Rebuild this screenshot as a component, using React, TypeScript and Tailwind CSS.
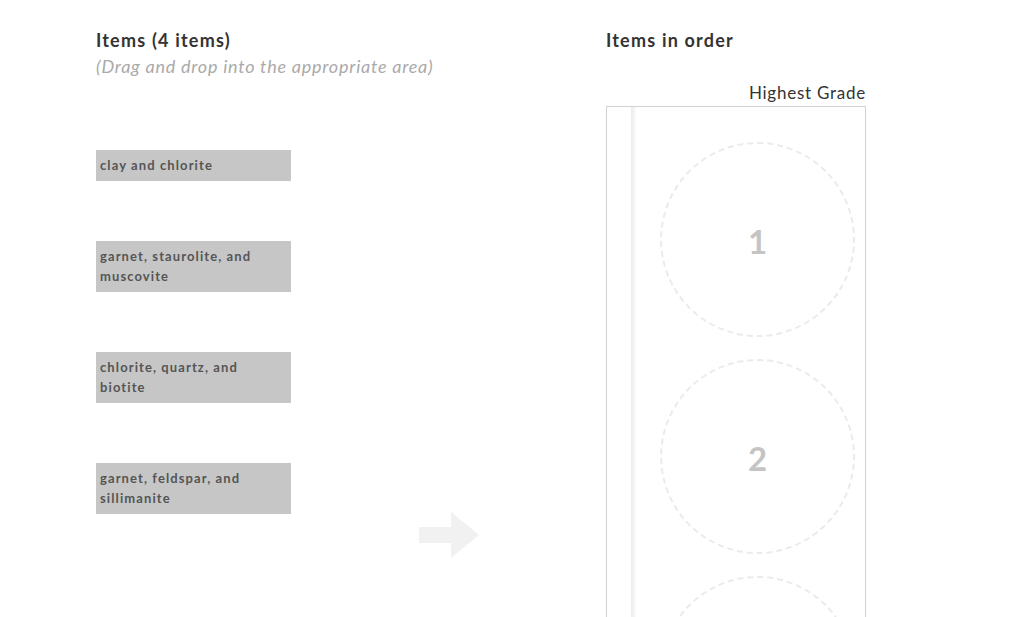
const items = [
  'clay and chlorite',
  'garnet, staurolite, and muscovite',
  'chlorite, quartz, and biotite',
  'garnet, feldspar, and sillimanite',
];

const slots = [1, 2, 3];

function Arrow() {
  return (
    <svg width="60" height="46" viewBox="0 0 60 46" className="block">
      <path d="M0 15 H32 V0 L60 23 L32 46 V31 H0 Z" fill="#f1f1f1" />
    </svg>
  );
}

export default function App() {
  return (
    <div
      className="h-[617px] w-[1024px] overflow-hidden bg-white text-[#333]"
      style={{ fontFamily: 'Lato, "Open Sans", sans-serif' }}
    >
      <div className="flex pl-[96px] pt-[29px]">
        {/* Left: draggable items */}
        <div className="w-[510px] flex-shrink-0">
          <h2 className="text-[18px] font-bold leading-[22px] tracking-[1.2px]">Items (4 items)</h2>
          <p className="text-[18px] italic leading-[30px] text-[#aaa] tracking-[0.75px]">
            (Drag and drop into the appropriate area)
          </p>

          <div className="mt-[69px] flex flex-col gap-[60px]">
            {items.map((item) => (
              <div
                key={item}
                className="w-[195px] bg-[#c6c6c6] py-[5px] pl-[4px] pr-[12px] text-[13px] font-bold leading-[20.5px] tracking-[1.1px] text-[#555]"
              >
                {item}
              </div>
            ))}
          </div>

          <div className="-mt-[2px] ml-[323px]">
            <Arrow />
          </div>
        </div>

        {/* Right: ordering column */}
        <div className="w-[260px] flex-shrink-0">
          <h2 className="text-[18px] font-bold leading-[22px] tracking-[1.2px]">Items in order</h2>
          <p className="mt-[30px] text-right text-[17px] leading-[24px] tracking-[0.75px] text-[#333]">
            Highest Grade
          </p>
          <div className="mt-[1px] flex h-[700px] border border-[#d2d2d2]">
            <div className="ml-[24px] w-[5px] flex-shrink-0 bg-gradient-to-r from-[#ececec] via-[#f3f3f3] to-[#fafafa]" />
            <div className="flex flex-col gap-[22px] pl-[24px] pt-[35px]">
              {slots.map((n) => (
                <div
                  key={n}
                  className="flex h-[195px] w-[195px] flex-shrink-0 items-center justify-center rounded-full border-2 border-dashed border-[#ebebeb]"
                >
                  <span className="pt-[4px] text-[33px] font-bold leading-none text-[#c4c4c4]">{n}</span>
                </div>
              ))}
            </div>
          </div>
        </div>
      </div>
    </div>
  );
}
